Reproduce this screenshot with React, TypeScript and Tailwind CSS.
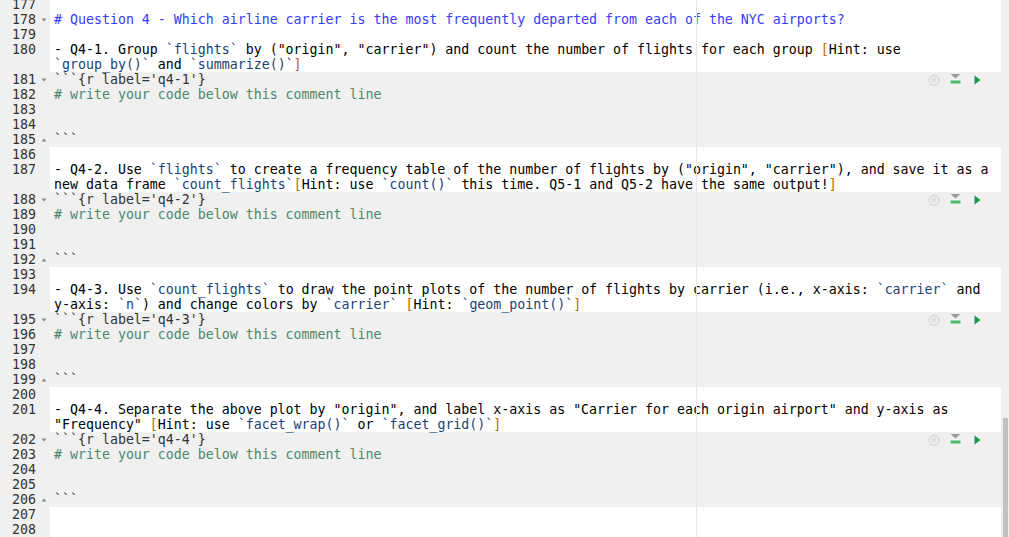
import React from "react";

type Row =
  | { kind: "md"; num?: number; text: string; fold?: "down" | "up"; head?: boolean }
  | { kind: "chunk"; num: number; text: string; role: "start" | "body" | "end" };

const rows: Row[] = [
  { kind: "md", num: 177, text: "" },
  { kind: "md", num: 178, text: "# Question 4 - Which airline carrier is the most frequently departed from each of the NYC airports?", fold: "down", head: true },
  { kind: "md", num: 179, text: "" },
  { kind: "md", num: 180, text: '- Q4-1. Group `flights` by ("origin", "carrier") and count the number of flights for each group [Hint: use' },
  { kind: "md", text: "`group_by()` and `summarize()`]" },
  { kind: "chunk", num: 181, text: "```{r label='q4-1'}", role: "start" },
  { kind: "chunk", num: 182, text: "# write your code below this comment line", role: "body" },
  { kind: "chunk", num: 183, text: "", role: "body" },
  { kind: "chunk", num: 184, text: "", role: "body" },
  { kind: "chunk", num: 185, text: "```", role: "end" },
  { kind: "md", num: 186, text: "" },
  { kind: "md", num: 187, text: '- Q4-2. Use `flights` to create a frequency table of the number of flights by ("origin", "carrier"), and save it as a' },
  { kind: "md", text: "new data frame `count_flights`[Hint: use `count()` this time. Q5-1 and Q5-2 have the same output!]" },
  { kind: "chunk", num: 188, text: "```{r label='q4-2'}", role: "start" },
  { kind: "chunk", num: 189, text: "# write your code below this comment line", role: "body" },
  { kind: "chunk", num: 190, text: "", role: "body" },
  { kind: "chunk", num: 191, text: "", role: "body" },
  { kind: "chunk", num: 192, text: "```", role: "end" },
  { kind: "md", num: 193, text: "" },
  { kind: "md", num: 194, text: "- Q4-3. Use `count_flights` to draw the point plots of the number of flights by carrier (i.e., x-axis: `carrier` and" },
  { kind: "md", text: "y-axis: `n`) and change colors by `carrier` [Hint: `geom_point()`]" },
  { kind: "chunk", num: 195, text: "```{r label='q4-3'}", role: "start" },
  { kind: "chunk", num: 196, text: "# write your code below this comment line", role: "body" },
  { kind: "chunk", num: 197, text: "", role: "body" },
  { kind: "chunk", num: 198, text: "", role: "body" },
  { kind: "chunk", num: 199, text: "```", role: "end" },
  { kind: "md", num: 200, text: "" },
  { kind: "md", num: 201, text: '- Q4-4. Separate the above plot by "origin", and label x-axis as "Carrier for each origin airport" and y-axis as' },
  { kind: "md", text: '"Frequency" [Hint: use `facet_wrap()` or `facet_grid()`]' },
  { kind: "chunk", num: 202, text: "```{r label='q4-4'}", role: "start" },
  { kind: "chunk", num: 203, text: "# write your code below this comment line", role: "body" },
  { kind: "chunk", num: 204, text: "", role: "body" },
  { kind: "chunk", num: 205, text: "", role: "body" },
  { kind: "chunk", num: 206, text: "```", role: "end" },
  { kind: "md", num: 207, text: "" },
  { kind: "md", num: 208, text: "" },
];

function MdText({ text }: { text: string }) {
  const parts: React.ReactNode[] = [];
  let buf = "";
  let i = 0;
  let key = 0;
  const flush = () => {
    if (buf) {
      parts.push(<span key={key++}>{buf}</span>);
      buf = "";
    }
  };
  while (i < text.length) {
    const c = text[i];
    if (c === "`") {
      const j = text.indexOf("`", i + 1);
      if (j > i) {
        flush();
        parts.push(
          <span key={key++} className="text-[#1d3f73]">
            {text.slice(i, j + 1)}
          </span>
        );
        i = j + 1;
        continue;
      }
    }
    if (c === "[" || c === "]") {
      flush();
      parts.push(
        <span key={key++} className="text-[#b86a00]">
          {c}
        </span>
      );
      i++;
      continue;
    }
    buf += c;
    i++;
  }
  flush();
  return <span className="relative">{parts}</span>;
}

function Gear() {
  return (
    <svg width="12" height="12" viewBox="0 0 24 24" fill="none" stroke="#cfcfcf" strokeWidth="2">
      <path d="M10.3 2h3.4l.5 2.6 1.9.8 2.2-1.5 2.4 2.4-1.5 2.2.8 1.9 2.6.5v3.4l-2.6.5-.8 1.9 1.5 2.2-2.4 2.4-2.2-1.5-1.9.8-.5 2.6h-3.4l-.5-2.6-1.9-.8-2.2 1.5-2.4-2.4 1.5-2.2-.8-1.9L2 13.7v-3.4l2.6-.5.8-1.9-1.5-2.2 2.4-2.4 2.2 1.5 1.9-.8z" />
      <circle cx="12" cy="12" r="3.2" />
    </svg>
  );
}

function RunAbove() {
  return (
    <svg width="11" height="11" viewBox="0 0 11 11">
      <polygon points="0.5,0 10.5,0 5.5,4.5" fill="#9a9a9a" />
      <rect x="0.5" y="6.5" width="10" height="3" fill="#4cbb6a" />
    </svg>
  );
}

function Play() {
  return (
    <svg width="7" height="10" viewBox="0 0 7 10">
      <polygon points="0.5,0.5 6.5,5 0.5,9.5" fill="#1a9a40" />
    </svg>
  );
}

function FoldArrow({ dir }: { dir: "down" | "up" }) {
  return (
    <svg width="6" height="6" viewBox="0 0 6 6" className="ml-[5px]">
      {dir === "down" ? (
        <polygon points="0.5,1.5 5.5,1.5 3,4.5" fill="#8a8a8a" />
      ) : (
        <polygon points="0.5,4.5 5.5,4.5 3,1.5" fill="#8a8a8a" />
      )}
    </svg>
  );
}

export default function App() {
  return (
    <div
      className="relative flex h-[537px] w-[1009px] overflow-hidden bg-[#f0f0f0] text-[13.28px] leading-[15px] text-black"
      style={{ fontFamily: '"DejaVu Sans Mono", "Liberation Mono", monospace' }}
    >
      <div className="flex w-[1001px] flex-col">
        <div className="-mt-[3px] flex flex-col">
          {rows.map((r, idx) => {
            const isChunk = r.kind === "chunk";
            const fold: "down" | "up" | undefined =
              r.kind === "chunk"
                ? r.role === "start"
                  ? "down"
                  : r.role === "end"
                  ? "up"
                  : undefined
                : r.fold;
            return (
              <div key={idx} className="flex h-[15px]">
                <div className="flex w-[50px] shrink-0 items-center bg-[#f0f0f0] pl-[12px] text-[#333333]">
                  <span className="w-[24px] text-right">{r.num ?? ""}</span>
                  {fold ? <FoldArrow dir={fold} /> : null}
                </div>
                <div
                  className={
                    isChunk
                      ? "flex flex-1 items-center whitespace-pre bg-[#f0f0f0] pl-[4px]"
                      : "flex flex-1 items-center whitespace-pre bg-white pl-[4px]"
                  }
                >
                  {r.kind === "chunk" ? (
                    r.role === "body" ? (
                      <span className="relative text-[#4c886b]">{r.text}</span>
                    ) : (
                      <span className="relative text-[#333333]">{r.text}</span>
                    )
                  ) : r.head ? (
                    <span className="relative text-[#3a3aff]">{r.text}</span>
                  ) : (
                    <MdText text={r.text} />
                  )}
                  {r.kind === "chunk" && r.role === "start" ? (
                    <div className="ml-auto mr-[20px] flex items-center">
                      <Gear />
                      <div className="ml-[10px]">
                        <RunAbove />
                      </div>
                      <div className="ml-[13px]">
                        <Play />
                      </div>
                    </div>
                  ) : null}
                </div>
              </div>
            );
          })}
        </div>
      </div>
      <div className="pointer-events-none absolute left-[696px] top-0 h-[537px] w-px bg-[#e6e6e6]" />
      <div className="flex w-[8px] flex-col bg-[#f0f0f0]">
        <div className="ml-[2px] mt-[418px] h-[119px] w-[5px] bg-[#c1c1c1]" />
      </div>
    </div>
  );
}
